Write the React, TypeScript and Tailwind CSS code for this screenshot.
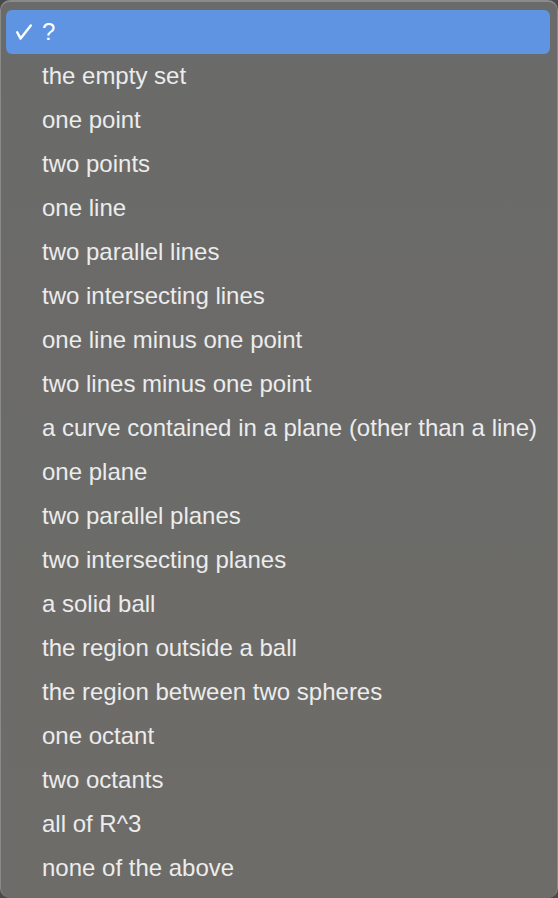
const items = [
  '?',
  'the empty set',
  'one point',
  'two points',
  'one line',
  'two parallel lines',
  'two intersecting lines',
  'one line minus one point',
  'two lines minus one point',
  'a curve contained in a plane (other than a line)',
  'one plane',
  'two parallel planes',
  'two intersecting planes',
  'a solid ball',
  'the region outside a ball',
  'the region between two spheres',
  'one octant',
  'two octants',
  'all of R^3',
  'none of the above',
];

function CheckMark() {
  return (
    <svg width="18" height="18" viewBox="0 0 18 18" fill="none">
      <path
        d="M2.2 9.2 L5.6 15.6 L15.8 2.4"
        stroke="currentColor"
        strokeWidth="2.4"
        strokeLinecap="round"
        strokeLinejoin="round"
      />
    </svg>
  );
}

export default function App() {
  return (
    <div className="w-[558px] h-[898px] overflow-hidden bg-[#4a4a4a]">
      <div
        className="h-full rounded-[10px] border-t-2 border-x border-[#8a8a8a] bg-gradient-to-b from-[#6a6a6a] to-[#6d6c68] pl-[5px] pr-[7px] pt-[8px] text-[#ececec] text-[24px]"
        style={{ fontFamily: '"Liberation Sans", Arial, sans-serif' }}
      >
        <ul className="flex flex-col">
          {items.map((label, i) => (
            <li
              key={label}
              className={
                'h-[44px] flex items-center rounded-[6px] ' +
                (i === 0 ? 'bg-[#5e94e2] text-white' : '')
              }
            >
              <span className="w-[36px] flex pl-[9px]">
                {i === 0 && <CheckMark />}
              </span>
              <span className="leading-none">{label}</span>
            </li>
          ))}
        </ul>
      </div>
    </div>
  );
}
